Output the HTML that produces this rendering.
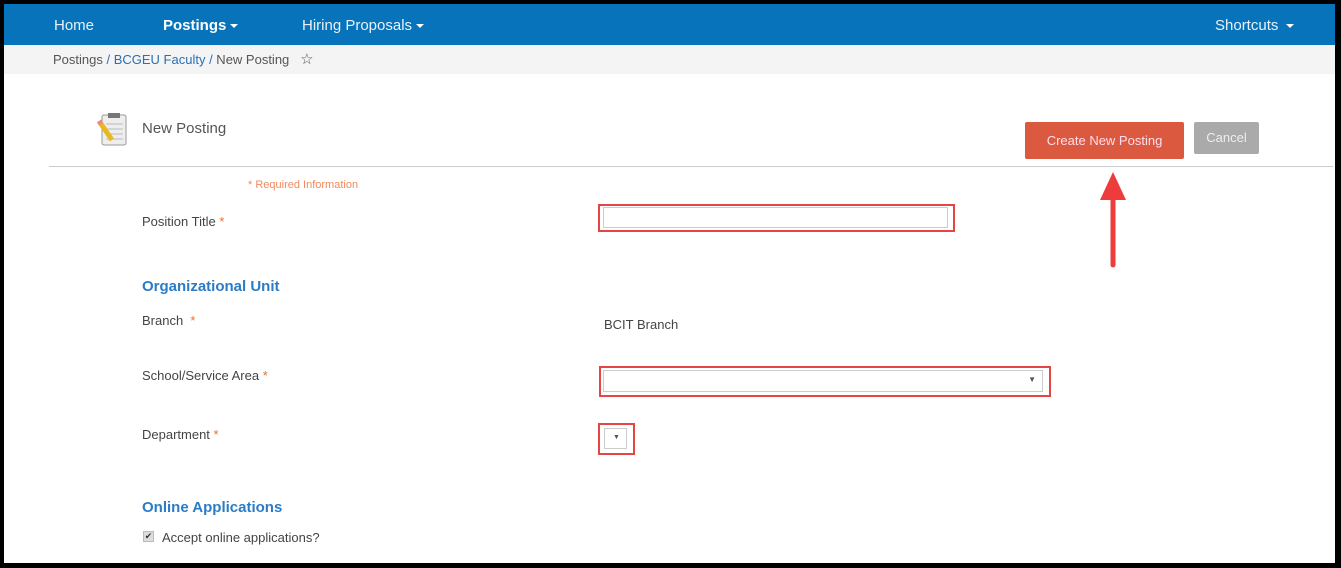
<!DOCTYPE html>
<html><head><style>
*{margin:0;padding:0;box-sizing:border-box}
body{width:1341px;height:568px;background:#000;font-family:"Liberation Sans",sans-serif;position:relative;overflow:hidden}
.page{position:absolute;left:4px;top:4px;width:1331px;height:559px;background:#fff}
.a{position:absolute;white-space:nowrap}
.nav{position:absolute;left:4px;top:4px;width:1331px;height:41px;background:#0773ba}
.nav .a{color:#e8f1f8;font-size:15px;top:13px}
.bc{position:absolute;left:4px;top:45px;width:1331px;height:29px;background:#f4f4f4}
.lbl{color:#444;font-size:13px}
.star{color:#e5712f}
.h{color:#2b7cc6;font-size:15px;font-weight:bold}
.red{position:absolute;border:2px solid #e64545}
.inp{position:absolute;border:1px solid #ccc;background:#fff}
.caret{display:inline-block;border-left:4px solid transparent;border-right:4px solid transparent;border-top:4px solid #fff;vertical-align:middle;margin-left:4px}
</style></head><body>
<div class="page"></div>
<div class="nav">
<div class="a" style="left:50px">Home</div>
<div class="a" style="left:159px;font-weight:bold;color:#fff">Postings<span class="caret"></span></div>
<div class="a" style="left:298px">Hiring Proposals<span class="caret"></span></div>
<div class="a" style="left:1211px">Shortcuts<span class="caret" style="margin-left:8px"></span></div>
</div>
<div class="bc">
<div class="a" style="left:49px;top:5px;font-size:13px;color:#555">Postings <span style="color:#2b6fb3">/ BCGEU Faculty /</span> New Posting &nbsp;&nbsp;<span style="font-size:15px;color:#555">☆</span></div>
</div>
<svg class="a" style="left:96px;top:112px" width="32" height="35" viewBox="0 0 32 35">
<rect x="6" y="3" width="24" height="30" rx="2" fill="#eee" stroke="#999"/>
<rect x="12" y="1" width="12" height="5" fill="#777"/>
<line x1="10" y1="12" x2="27" y2="12" stroke="#bbb"/><line x1="10" y1="17" x2="27" y2="17" stroke="#bbb"/><line x1="10" y1="22" x2="27" y2="22" stroke="#bbb"/><line x1="10" y1="27" x2="27" y2="27" stroke="#bbb"/>
<line x1="3" y1="9" x2="16" y2="28" stroke="#e8b820" stroke-width="5"/>
<line x1="3" y1="9" x2="5" y2="12" stroke="#e88" stroke-width="5"/>
</svg>
<div class="a" style="left:142px;top:120px;font-size:15px;color:#555">New Posting</div>
<div class="a" style="left:1025px;top:122px;width:159px;height:37px;background:#db5a3f;border-radius:2px;color:#fde;font-size:13px;text-align:center;line-height:37px">Create New Posting</div>
<div class="a" style="left:1194px;top:122px;width:65px;height:32px;background:#aaa;border-radius:2px;color:#eee;font-size:13px;text-align:center;line-height:32px">Cancel</div>
<div class="a" style="left:49px;top:166px;width:1284px;height:1px;background:#ccc"></div>
<svg class="a" style="left:1098px;top:170px" width="30" height="100"><polygon points="15,2 2,30 28,30" fill="#ee3b3b"/><line x1="15" y1="28" x2="15" y2="95" stroke="#ee3b3b" stroke-width="5" stroke-linecap="round"/></svg>
<div class="a" style="left:248px;top:179px;font-size:11px;color:#f08a5d">* Required Information</div>
<div class="a lbl" style="left:142px;top:214px">Position Title <span class="star">*</span></div>
<div class="red" style="left:598px;top:204px;width:357px;height:28px"></div>
<div class="inp" style="left:603px;top:207px;width:345px;height:21px"></div>
<div class="a h" style="left:142px;top:278px">Organizational Unit</div>
<div class="a lbl" style="left:142px;top:313px">Branch &nbsp;<span class="star">*</span></div>
<div class="a lbl" style="left:604px;top:317px">BCIT Branch</div>
<div class="a lbl" style="left:142px;top:368px">School/Service Area <span class="star">*</span></div>
<div class="red" style="left:599px;top:366px;width:452px;height:31px"></div>
<div class="inp" style="left:603px;top:370px;width:440px;height:22px"><span style="position:absolute;right:6px;top:4px;font-size:8px;color:#555">▼</span></div>
<div class="a lbl" style="left:142px;top:427px">Department <span class="star">*</span></div>
<div class="red" style="left:598px;top:423px;width:37px;height:32px"></div>
<div class="inp" style="left:604px;top:428px;width:23px;height:21px"><span style="position:absolute;left:8px;top:5px;font-size:7px;color:#555">▼</span></div>
<div class="a h" style="left:142px;top:499px">Online Applications</div>
<div class="a" style="left:143px;top:531px;width:11px;height:11px;background:#ddd;border:1px solid #bbb;font-size:9px;line-height:9px;text-align:center;color:#333">✔</div>
<div class="a lbl" style="left:162px;top:530px">Accept online applications?</div>
</body></html>
